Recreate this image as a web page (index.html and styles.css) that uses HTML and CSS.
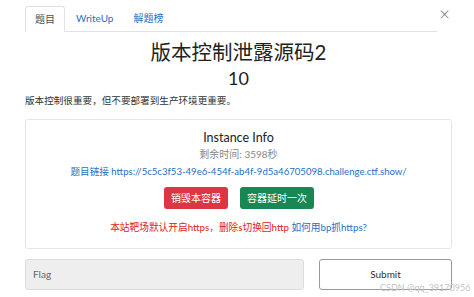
FILE: index.html
```html
<!DOCTYPE html>
<html>
<head>
<meta charset="utf-8">
<link rel="stylesheet" href="styles.css">
</head>
<body>
<div class="modal">
  <div class="tabbar">
    <div class="tabs">
      <span class="tab active">题目</span>
      <span class="tab">WriteUp</span>
      <span class="tab">解题榜</span>
    </div>
    <span class="close">×</span>
  </div>
  <h1 class="title">版本控制泄露源码2</h1>
  <div class="points">10</div>
  <p class="desc">版本控制很重要，但不要部署到生产环境更重要。</p>
  <div class="card">
    <div class="info-title">Instance Info</div>
    <div class="remain">剩余时间: 3598秒</div>
    <div class="link">题目链接 https://5c5c3f53-49e6-454f-ab4f-9d5a46705098.challenge.ctf.show/</div>
    <div class="btns">
      <span class="btn red">销毁本容器</span>
      <span class="btn green">容器延时一次</span>
    </div>
    <div class="notice"><span class="warn">本站靶场默认开启https，删除s切换回http</span> <span class="blue">如何用bp抓https?</span></div>
  </div>
  <div class="form">
    <div class="flag">Flag</div>
    <div class="submit">Submit</div>
  </div>
</div>
<div class="wm">CSDN @qq_39170956</div>
</body>
</html>
```
FILE: styles.css
```css
html, body { margin: 0; padding: 0; background: #fff; }
body { width: 474px; height: 297px; overflow: hidden; position: relative; font-family: Lato, "Noto Sans CJK SC", sans-serif; color: #212529; }
.modal { padding: 6px 22px 0 25px; }
.tabbar { position: relative; border-bottom: 1px solid #dee2e6; height: 25px; margin-right: 15px; }
.tabs { display: flex; height: 25px; }
.tab { font-size: 10px; color: #1f6fc5; padding: 0 10px; line-height: 25px; }
.tab.active { color: #495057; border: 1px solid #dee2e6; border-bottom-color: #fff; border-radius: 3px 3px 0 0; height: 26px; box-sizing: border-box; line-height: 24px; padding: 0 9px; margin-right: 1px; background: #fff; }
.close { position: absolute; right: -13px; top: -4px; font-size: 19px; color: #777; font-weight: 300; }
.title { font-size: 20.5px; font-weight: 400; text-align: center; margin: 7px 0 0; line-height: 26px; color: #222; }
.points { text-align: center; font-size: 18px; line-height: 22px; margin-top: 2px; color: #222; }
.desc { font-size: 9.6px; margin: 5px 0 0; line-height: 14px; color: #333; }
.card { margin-top: 11px; border: 1px solid #e6e6e6; border-radius: 3px; height: 130px; box-sizing: border-box; text-align: center; padding-top: 10px; }
.info-title { font-size: 12.5px; line-height: 16px; color: #222; }
.remain { font-size: 10px; color: #888; line-height: 13px; margin-top: 2px; }
.link { font-size: 9.6px; color: #1f6fc5; line-height: 13px; margin-top: 4px; }
.btns { display: flex; justify-content: center; gap: 12px; margin-top: 9px; margin-left: 1px; }
.btn { font-size: 10px; color: #fff; border-radius: 3px; height: 22px; line-height: 22px; padding: 0 7px; }
.red { background: #dc3545; }
.green { background: #198754; }
.notice { font-size: 9.7px; line-height: 13px; margin-top: 12px; }
.warn { color: #e01b1b; }
.blue { color: #1f6fc5; }
.form { display: flex; gap: 15px; margin-top: 10px; height: 31px; }
.flag { flex: 1; background: #eee; border: 1px solid #ddd; border-radius: 3px; font-size: 10px; color: #666; line-height: 29px; padding-left: 7px; }
.submit { width: 133px; box-sizing: border-box; border: 1px solid #999; border-radius: 3px; text-align: center; font-size: 10px; line-height: 29px; color: #333; }
.wm { position: absolute; left: 380px; top: 282px; font-size: 9px; color: #c4c4c4; }
```
